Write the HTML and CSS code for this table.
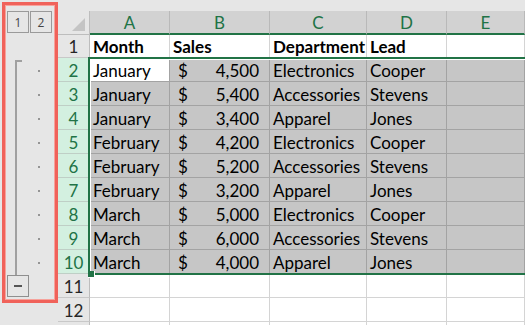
FILE: index.html
```html
<!DOCTYPE html>
<html>
<head>
<meta charset="utf-8">
<link rel="stylesheet" href="styles.css">
</head>
<body>
<div class="app">
  <div class="gutter">
    <div class="frame">
      <div class="levels">
        <div class="lvl">1</div>
        <div class="lvl">2</div>
      </div>
      <div class="outline">
        <div class="bracket-col">
          <div class="bracket"></div>
          <div class="collapse"><span class="minus"></span></div>
        </div>
        <div class="dots">
          <div class="slot"><i></i></div><div class="slot"><i></i></div><div class="slot"><i></i></div>
          <div class="slot"><i></i></div><div class="slot"><i></i></div><div class="slot"><i></i></div>
          <div class="slot"><i></i></div><div class="slot"><i></i></div><div class="slot"><i></i></div>
        </div>
      </div>
    </div>
  </div>
  <div class="sheet">
    <div class="corner"><span class="tri"></span></div>
    <div class="ch">A</div><div class="ch">B</div><div class="ch">C</div><div class="ch">D</div><div class="ch">E</div>

    <div class="rh">1</div>
    <div class="c hd">Month</div><div class="c hd">Sales</div><div class="c hd">Department</div><div class="c hd">Lead</div><div class="c"></div>

    <div class="rh sel">2</div>
    <div class="c s active">January</div><div class="c s acc"><span>$</span><span>4,500</span></div><div class="c s">Electronics</div><div class="c s">Cooper</div><div class="c s"></div>

    <div class="rh sel">3</div>
    <div class="c s">January</div><div class="c s acc"><span>$</span><span>5,400</span></div><div class="c s">Accessories</div><div class="c s">Stevens</div><div class="c s"></div>

    <div class="rh sel">4</div>
    <div class="c s">January</div><div class="c s acc"><span>$</span><span>3,400</span></div><div class="c s">Apparel</div><div class="c s">Jones</div><div class="c s"></div>

    <div class="rh sel">5</div>
    <div class="c s">February</div><div class="c s acc"><span>$</span><span>4,200</span></div><div class="c s">Electronics</div><div class="c s">Cooper</div><div class="c s"></div>

    <div class="rh sel">6</div>
    <div class="c s">February</div><div class="c s acc"><span>$</span><span>5,200</span></div><div class="c s">Accessories</div><div class="c s">Stevens</div><div class="c s"></div>

    <div class="rh sel">7</div>
    <div class="c s">February</div><div class="c s acc"><span>$</span><span>3,200</span></div><div class="c s">Apparel</div><div class="c s">Jones</div><div class="c s"></div>

    <div class="rh sel">8</div>
    <div class="c s">March</div><div class="c s acc"><span>$</span><span>5,000</span></div><div class="c s">Electronics</div><div class="c s">Cooper</div><div class="c s"></div>

    <div class="rh sel">9</div>
    <div class="c s">March</div><div class="c s acc"><span>$</span><span>6,000</span></div><div class="c s">Accessories</div><div class="c s">Stevens</div><div class="c s"></div>

    <div class="rh sel">10</div>
    <div class="c s">March</div><div class="c s acc"><span>$</span><span>4,000</span></div><div class="c s">Apparel</div><div class="c s">Jones</div><div class="c s"></div>

    <div class="rh">11</div>
    <div class="c"></div><div class="c"></div><div class="c"></div><div class="c"></div><div class="c"></div>

    <div class="rh">12</div>
    <div class="c"></div><div class="c"></div><div class="c"></div><div class="c"></div><div class="c"></div>

    <div class="rh"></div>
    <div class="c"></div><div class="c"></div><div class="c"></div><div class="c"></div><div class="c"></div>

    <div class="selection"></div>
    <div class="handle"></div>
  </div>
</div>
</body>
</html>
```

FILE: styles.css
```css
* { box-sizing: border-box; }
html, body {
  margin: 0;
  padding: 0;
  width: 525px;
  height: 325px;
  overflow: hidden;
  background: #e6e6e6;
}
body {
  font-family: Lato, "Liberation Sans", sans-serif;
  font-size: 17px;
  color: #000;
}
.app {
  display: flex;
  width: 525px;
  height: 325px;
  overflow: hidden;
}

/* Outline gutter */
.gutter {
  width: 58px;
  flex: none;
  padding: 2px 0 0 2px;
}
.frame {
  width: 56px;
  height: 301px;
  border: 3px solid #f0625a;
  box-shadow: inset 0 0 0 1px #f6a39c;
  padding: 6px 0 0 2px;
}
.levels {
  display: flex;
  gap: 1px;
}
.lvl {
  width: 22px;
  height: 22px;
  border: 1px solid #9a9a9a;
  display: flex;
  align-items: center;
  justify-content: center;
  font-family: "Open Sans", sans-serif;
  font-size: 12px;
  color: #444;
}
.outline {
  display: flex;
  margin-top: 27px;
}
.bracket-col {
  width: 22px;
  display: flex;
  flex-direction: column;
}
.bracket {
  margin-left: 8px;
  width: 7px;
  height: 215px;
  border-left: 2px solid #a0a0a0;
  border-top: 2px solid #a0a0a0;
}
.collapse {
  width: 22px;
  height: 22px;
  border: 1px solid #8f8f8f;
  display: flex;
  align-items: center;
  justify-content: center;
}
.minus {
  width: 8px;
  height: 2px;
  background: #555;
}
.dots {
  margin-left: 9px;
}
.slot {
  height: 24px;
  padding-top: 10px;
}
.slot i {
  display: block;
  width: 2px;
  height: 2px;
  background: #959595;
}

/* Sheet grid */
.sheet {
  position: relative;
  flex: 1;
  height: 314px;
  overflow: hidden;
  margin-top: 11px;
  display: grid;
  grid-template-columns: 32px 80px 100px 97px 80px 1fr;
  grid-template-rows: 24px 23px repeat(12, 24px);
  background: #fff;
}
.corner {
  position: relative;
  background: #e6e6e6;
  border-right: 1px solid #bdbdbd;
  border-bottom: 1px solid #bdbdbd;
}
.tri {
  position: absolute;
  right: 4px;
  bottom: 3px;
  width: 0;
  height: 0;
  border-left: 13px solid transparent;
  border-bottom: 13px solid #c4c4c4;
}
.ch {
  background: #d2d2d2;
  color: #217346;
  border-right: 1px solid #b9b9b9;
  border-bottom: 2px solid #217346;
  display: flex;
  align-items: center;
  justify-content: center;
  padding-top: 1px;
}
.rh {
  background: #e6e6e6;
  color: #262626;
  border-right: 1px solid #bdbdbd;
  border-bottom: 1px solid #c8c8c8;
  display: flex;
  align-items: center;
  justify-content: center;
  padding-top: 1px;
}
.rh.sel {
  background: #d3f0e0;
  color: #217346;
  border-bottom-color: #bfcfc6;
}
.c {
  border-right: 1px solid #d4d4d4;
  border-bottom: 1px solid #d4d4d4;
  display: flex;
  align-items: center;
  padding: 1px 0 0 3px;
  white-space: nowrap;
  overflow: hidden;
}
.c.hd { font-weight: bold; }
.c.s {
  background: #c6c6c6;
  border-right-color: #a3a3a3;
  border-bottom-color: #a3a3a3;
}
.c.s.active { background: #fff; }
.c.acc {
  justify-content: space-between;
  padding: 1px 10px 0 8px;
}

.selection {
  position: absolute;
  left: 30px;
  top: 46px;
  width: 480px;
  height: 218px;
  border: 2px solid #217346;
  box-shadow: inset 1px 1px 0 #fff;
  pointer-events: none;
}
.handle {
  position: absolute;
  left: 30px;
  top: 260px;
  width: 7px;
  height: 7px;
  background: #217346;
  border-right: 1px solid #fff;
  border-bottom: 1px solid #fff;
}
```
